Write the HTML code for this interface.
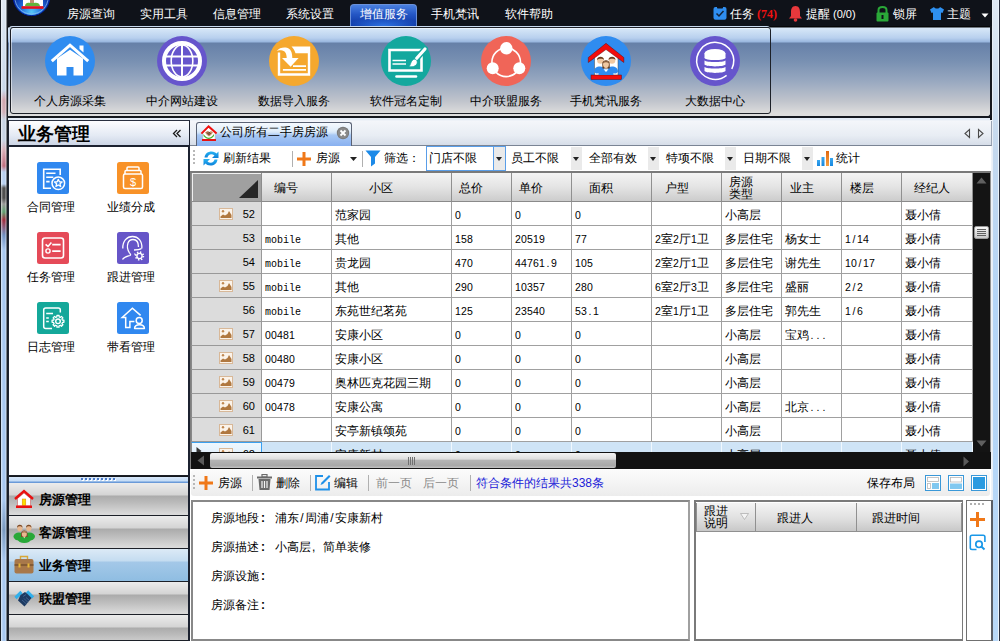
<!DOCTYPE html>
<html><head><meta charset="utf-8">
<style>
*{margin:0;padding:0;box-sizing:border-box;white-space:nowrap}
html,body{width:1000px;height:641px;overflow:hidden;background:#0f1219;font-family:"Liberation Sans",sans-serif;font-size:12px;color:#000}
.a{position:absolute}
#winL{left:0;top:0;width:8px;height:641px;background:linear-gradient(90deg,#1a1e24 0,#1a1e24 1px,rgba(255,255,255,0.6) 1px,rgba(255,255,255,0) 3px,rgba(255,255,255,0) 5px,rgba(255,255,255,0.5) 6px,#1a1e24 7px),linear-gradient(180deg,#dfe8f2 0,#c8d8ea 90px,#d0a8b0 100px,#d0b0b8 112px,#c8d4e4 120px,#c8d4e4 140px,#d8b0b8 150px,#c07080 166px,#b8d0f0 172px,#b8d0f0 184px,#505050 188px,#505050 198px,#9a9a9a 204px,#60a070 212px,#a03040 220px,#7090c0 235px,#a8c8f0 250px,#a8c8f0 500px,#7a9ac0 530px,#a8c8f0 560px,#a8c8f0 641px)}
#winR{left:992px;top:0;width:8px;height:641px;background:linear-gradient(90deg,#e8eef6 0,#e8eef6 1px,rgba(255,255,255,0) 1px,rgba(255,255,255,0) 6px,#eaf2fa 6px,#eaf2fa 7px,#2a3040 7px),linear-gradient(180deg,#dfe9f4 0,#c4d8ee 150px,#b4d4f6 300px,#b8d8f8 641px)}
#menubar{left:8px;top:0;width:984px;height:26px;background:#0f1219}
.mi{position:absolute;top:5px;height:20px;line-height:19px;color:#fff;font-size:12px;text-align:center;white-space:nowrap}
.mi.act{top:4px;height:22px;line-height:18px;background:radial-gradient(ellipse 60% 40% at 50% 100%,rgba(60,140,255,0.7),rgba(60,140,255,0) 100%),linear-gradient(180deg,#4a80e0 0,#2456c4 45%,#0c34a0 100%);border-radius:4px 4px 0 0;border:1px solid #6a90d8;border-bottom:none}
#ribbon{left:8px;top:26px;width:984px;height:92px;border-right:2px solid #15181f;border-bottom:2px solid #15181f;border-bottom-right-radius:4px;background:linear-gradient(180deg,#050608 0,#050608 1px,#d8e8f8 2px,#b8d0ee 12px,#98b6de 16px,#6680a8 17px,#7890b2 35px,#98a8c0 55px,#c0c4cc 75px,#dcdcdc 87px,#dedede 90px)}
#grp{left:10px;top:27px;width:761px;height:87px;border:1px solid #1c2028;border-radius:3px;box-shadow:-1px -1px 0 #c8d8ec,inset 1px 1px 0 rgba(255,255,255,0.5)}
.rb{position:absolute;top:36px;width:50px;height:50px;border-radius:50%}
.rl{position:absolute;top:94px;width:100px;text-align:center;font-size:12px;color:#000;line-height:14px}
#sep1{left:8px;top:118px;width:982px;height:3px;background:linear-gradient(180deg,#e4ecf6 0,#e4ecf6 2px,#2a3040 2px)}
#left{left:8px;top:121px;width:182px;height:520px;background:#fff}
#lhdr{left:8px;top:121px;width:182px;height:26px;background:linear-gradient(180deg,#fdfdff 0,#e4eaf4 60%,#cdd6e6 100%);border-left:1px solid #1c2230;border-right:1px solid #1c2230;border-bottom:2px solid #1c2230}
.lt{font-size:12px;line-height:14px;color:#000}
.acc{left:9px;width:179px;height:33px;border-bottom:1px solid #1c2028;background:linear-gradient(180deg,#ececec 0,#d4d4d4 12px,#ababab 13px,#bcbcbc 20px,#dadada 31px)}
.acc.sel{background:linear-gradient(180deg,#dceaf6 0,#c4dcf0 12px,#a4c8e8 13px,#90bee2 31px)}
.at{position:absolute;left:30px;top:9px;font-size:13px;font-weight:bold;line-height:15px}
.hc{height:29px;background:linear-gradient(180deg,#f4f4f4 0,#e4e4e4 50%,#cccccc 100%);border-right:1px solid #909090;border-bottom:1px solid #8a8a8a}
.ht{font-size:12px;line-height:14px;text-align:center}
.rh{left:191px;width:71px;height:24px;background:#dcdcdc;border-right:1px solid #999;border-bottom:1px solid #999;border-left:1px solid #888}
.rh.rs{background:linear-gradient(180deg,#eef7fe,#d6eafa);border:1px solid #3aa0f0;border-left:1px solid #888;border-bottom:none}
.dc{height:24px;background:#fff;border-right:1px solid #a0a0a0;border-bottom:1px solid #a0a0a0}
.dc.ds{background:#cfe4f6;border-right-color:#f0f8ff}
.rn{font-size:11px;line-height:13px;width:26px;text-align:right}
.ct{font-size:12px;line-height:14px}
.mo{font-family:"Liberation Mono",monospace;font-size:10px;display:inline-block;width:6px;text-align:center}
.dg{font-size:10.5px;display:inline-block;width:6px;text-align:center}
.tb{font-size:12px;line-height:14px}
.grip{width:2px;height:16px;margin-left:1px;background:repeating-linear-gradient(180deg,#b8b8b8 0,#b8b8b8 2px,transparent 2px,transparent 4px)}
.vsep{width:1px;height:16px;background:#b0b0b0}
.ddg{top:147px;width:11px;height:23px;background:#eaeaea}
.dd{top:147px;width:11px;height:23px}.dd:after{content:"";position:absolute;left:2px;top:10px;border-left:3.5px solid transparent;border-right:3.5px solid transparent;border-top:4px solid #222}
.dt{font-size:12px;line-height:14px}
.fh{height:28px;background:linear-gradient(180deg,#f4f4f4 0,#e0e0e0 55%,#c8c8c8 100%)}
#main{left:190px;top:120px;width:802px;height:521px;background:#eef2f8}
</style></head><body>
<div id="winL" class="a"></div>
<div id="winR" class="a"></div>
<div id="menubar" class="a">
<svg class="a" style="left:5px;top:0" width="38" height="17" viewBox="0 0 38 17">
<defs><radialGradient id="lg" cx="0.5" cy="0.9" r="0.6"><stop offset="0" stop-color="#58c8f8"/><stop offset="0.5" stop-color="#1f6ee0"/><stop offset="1" stop-color="#0a2a9a"/></radialGradient></defs>
<circle cx="18.5" cy="-2.6" r="18.2" fill="url(#lg)" stroke="#0020a0" stroke-width="1"/>
<circle cx="18.5" cy="-2.6" r="16.6" fill="none" stroke="#9cc8f4" stroke-width="0.8" opacity="0.8"/>
<rect x="10" y="0" width="20" height="6.5" fill="#fff"/>
<path d="M12 6 C12 3 15 2 17 3 L18 0 L20 0 L21 3 C23 2 27 3 27 6Z" fill="#62b43a"/>
<rect x="17" y="0" width="4" height="3" fill="#c09070"/>
<rect x="8.5" y="6.2" width="22" height="2.6" fill="#e8101a"/>
</svg>
<div class="mi" style="left:59px;width:48px">房源查询</div>
<div class="mi" style="left:131.5px;width:48px">实用工具</div>
<div class="mi" style="left:204.5px;width:48px">信息管理</div>
<div class="mi" style="left:277.5px;width:48px">系统设置</div>
<div class="mi act" style="left:342px;width:67px">增值服务</div>
<div class="mi" style="left:423px;width:48px">手机梵讯</div>
<div class="mi" style="left:497px;width:48px">软件帮助</div>
<svg class="a" style="left:705px;top:6px" width="14" height="14" viewBox="0 0 14 14"><rect x="0.5" y="1" width="13" height="12.8" rx="2" fill="#2f8ef0"/><rect x="4" y="0.3" width="6" height="2.2" rx="0.8" fill="#0f1219"/><path d="M3.5 7.5 L6 10 L10.5 5" stroke="#14243c" stroke-width="1.5" fill="none"/></svg>
<div class="mi" style="left:722px;width:26px;text-align:left">任务</div>
<div class="mi" style="left:749px;width:30px;text-align:left;color:#f01010;font-weight:bold;font-size:12px;font-family:'Liberation Serif',serif">(74)</div>
<svg class="a" style="left:780px;top:5px" width="15" height="17" viewBox="0 0 15 17"><path d="M7.5 1 C4 1 3 4 3 7 L3 11 L1 13.5 L14 13.5 L12 11 L12 7 C12 4 11 1 7.5 1Z" fill="#e8383c"/><circle cx="7.5" cy="15" r="1.8" fill="#e8383c"/></svg>
<div class="mi" style="left:798px;width:26px;text-align:left">提醒</div>
<div class="mi" style="left:825px;width:30px;text-align:left;font-size:11px">(0/0)</div>
<svg class="a" style="left:867px;top:5px" width="15" height="17" viewBox="0 0 15 17"><path d="M3.5 8 L3.5 5 C3.5 1 11.5 1 11.5 5 L11.5 8" stroke="#2aa838" stroke-width="2" fill="none"/><rect x="1.5" y="7.5" width="12" height="9" rx="1" fill="#2aa838"/><rect x="6.5" y="10" width="2" height="4" fill="#0f1219"/></svg>
<div class="mi" style="left:885px;width:26px;text-align:left">锁屏</div>
<svg class="a" style="left:921px;top:6px" width="16" height="15" viewBox="0 0 16 15"><path d="M5 1 L1 3.5 L2.5 7 L4 6.5 L4 14 L12 14 L12 6.5 L13.5 7 L15 3.5 L11 1 C10 3 6 3 5 1Z" fill="#2e90f0"/></svg>
<div class="mi" style="left:939px;width:26px;text-align:left">主题</div>
<svg class="a" style="left:973px;top:13px" width="8" height="5" viewBox="0 0 8 5"><path d="M0.5 0.5 L7.5 0.5 L4 4.5Z" fill="#fff"/></svg>
</div>
<div id="ribbon" class="a"></div>
<div id="grp" class="a"></div>
<svg class="a" style="left:45px;top:36px" width="50" height="50" viewBox="0 0 50 50"><circle cx="25" cy="25" r="25" fill="#2f8cf0"/>
<path d="M6.8 25.2 L25 9.2 L43.2 25.2" stroke="#fff" stroke-width="3" fill="none" stroke-linejoin="miter"/>
<path d="M12 22.5 L25 13.8 L38 22.5 L38 39.5 L28.5 39.5 L28.5 31 L21.5 31 L21.5 39.5 L12 39.5Z" fill="#fff"/>
<path d="M34.5 9.5 L38.5 9.5 L38.5 16.5 L34.5 13Z" fill="#fff"/></svg>
<svg class="a" style="left:157px;top:36px" width="50" height="50" viewBox="0 0 50 50"><circle cx="25" cy="25" r="25" fill="#6655cc"/>
<circle cx="25" cy="25" r="18" stroke="#fff" stroke-width="4" fill="none"/>
<ellipse cx="25" cy="25" rx="10.8" ry="16" stroke="#fff" stroke-width="1.6" fill="none"/>
<path d="M25 9 L25 41 M9 20.5 L41 20.5 M9 29.5 L41 29.5" stroke="#fff" stroke-width="2" fill="none"/></svg>
<svg class="a" style="left:269px;top:36px" width="50" height="50" viewBox="0 0 50 50"><circle cx="25" cy="25" r="25" fill="#f5a82e"/>
<path d="M10 16.5 L10 38.5 L40 38.5 L40 17" stroke="#fff" stroke-width="2.4" fill="none"/>
<path d="M22.5 10.5 L41.2 10.5 L41.2 17.3 L26.5 17.3 C25.5 14.5 24.5 12.3 22.5 10.5Z" fill="#fff"/>
<path d="M7.7 15 C10 11.5 15 11 18 11.8 C21.5 12.8 23.3 16 23.3 22 L17.7 22 C17.7 17.5 16 14.5 12 14.3 C10 14.2 8.5 14.6 7.7 15Z" fill="#fff"/>
<path d="M13 22 L29.6 22 L21.6 30.8Z" fill="#fff"/>
<path d="M24 30.2 L37 30.2 M13.9 33.9 L37 33.9" stroke="#fff" stroke-width="1.8"/></svg>
<svg class="a" style="left:381px;top:36px" width="50" height="50" viewBox="0 0 50 50"><circle cx="25" cy="25" r="25" fill="#13a89e"/>
<path d="M8.5 14 L40.5 14 L40.5 34.5 L8.5 34.5Z" stroke="#fff" stroke-width="2.6" fill="none"/>
<path d="M15.5 40.5 L35 40.5" stroke="#fff" stroke-width="2.6" stroke-linecap="round"/>
<path d="M11.5 24.5 L25 24.5 M11.5 28 L25 28" stroke="#fff" stroke-width="1.7"/>
<path d="M44 13 L35 23" stroke="#13a89e" stroke-width="6" stroke-linecap="round"/><path d="M44 13 L35.5 22.5" stroke="#fff" stroke-width="3.2" stroke-linecap="round"/>
<path d="M34 23 C37 24 37.5 29 32.5 30.5 C30.5 31 29 30.8 28 30.5 C30 29 29.5 23.5 34 23Z" fill="#fff" stroke="#13a89e" stroke-width="0.8"/></svg>
<svg class="a" style="left:481px;top:36px" width="50" height="50" viewBox="0 0 50 50"><circle cx="25" cy="25" r="25" fill="#f06558"/>
<circle cx="25.2" cy="26.3" r="14.3" stroke="#fff" stroke-width="1.6" fill="none"/>
<circle cx="25.3" cy="12.3" r="6.2" fill="#fff"/><circle cx="11.7" cy="32.2" r="6" fill="#fff"/><circle cx="38.3" cy="32.2" r="6" fill="#fff"/></svg>
<svg class="a" style="left:581px;top:36px" width="50" height="50" viewBox="0 0 50 50"><circle cx="25" cy="25" r="25" fill="#2f8cf0"/>
<path d="M13.5 20 L25 12 L37 20 L37 39.5 L13.5 39.5Z" fill="#fff" stroke="#444" stroke-width="0.5"/>
<path d="M25 7.3 L42.8 21.5 L42.8 26.5 L25 13.5 L7.3 26.5 L7.3 21.5Z" fill="#f20c0c" stroke="#5a1010" stroke-width="0.5"/>
<rect x="10" y="39" width="30.5" height="4.5" fill="#f20c0c" stroke="#5a1010" stroke-width="0.5"/>
<path d="M13 36 C13 32 15.5 30.5 19 30.5 C21.5 30.5 23 31.5 23.5 33 L23 37 L15 37.5Z" fill="#2f8cf0"/>
<path d="M37 36 C37 32 34.5 30.5 31 30.5 C28.5 30.5 27 31.5 26.5 33 L27 37 L35 37.5Z" fill="#2f8cf0"/>
<circle cx="19.5" cy="24.5" r="3.3" fill="#f2c9a2"/><path d="M16 24 C15.8 20 23 19.5 23 24 C22 22.2 17.5 22.2 16 24Z" fill="#6a3c1c"/>
<circle cx="31" cy="24.5" r="3.3" fill="#f2c9a2"/><path d="M27.5 24 C27.3 20 34.5 19.5 34.5 24 C33.5 22.2 29 22.2 27.5 24Z" fill="#6a3c1c"/>
<path d="M17.5 39 C17.5 34.5 20.5 33 25 33 C29.5 33 32.5 34.5 32.5 39Z" fill="#2f8cf0"/>
<path d="M22.5 33.2 L25 36 L27.5 33.2Z" fill="#fff"/>
<path d="M21.3 28 C21 23 29 23 28.7 28 L28.8 32.5 L27.5 32.5 L21.5 32.5 Z" fill="#6a3c1c"/>
<ellipse cx="25" cy="28.5" rx="2.9" ry="3.4" fill="#f2c9a2"/>
<path d="M22 27 C22.5 24.8 27.5 24.8 28 27 C27 26 23 26 22 27Z" fill="#6a3c1c"/></svg>
<svg class="a" style="left:690px;top:36px" width="50" height="50" viewBox="0 0 50 50"><circle cx="25" cy="25" r="25" fill="#6655cc"/>
<path d="M36.6 39.4 A18.5 18.5 0 1 1 41.8 33" stroke="#fff" stroke-width="1.5" fill="none"/>
<ellipse cx="25" cy="17.5" rx="10.5" ry="4.5" fill="#fff"/><rect x="14.5" y="17.5" width="21" height="4.5" fill="#fff"/><ellipse cx="25" cy="22" rx="10.5" ry="2" fill="#fff"/>
<path d="M14.5 24.5 C17 26.5 33 26.5 35.5 24.5 L35.5 28.5 C33 31 17 31 14.5 28.5Z" fill="#fff"/>
<path d="M14.5 31 C17 33 33 33 35.5 31 L35.5 35 C33 37.5 17 37.5 14.5 35Z" fill="#fff"/></svg>
<div class="rl" style="left:20px">个人房源采集</div>
<div class="rl" style="left:132px">中介网站建设</div>
<div class="rl" style="left:244px">数据导入服务</div>
<div class="rl" style="left:356px">软件冠名定制</div>
<div class="rl" style="left:456px">中介联盟服务</div>
<div class="rl" style="left:556px">手机梵讯服务</div>
<div class="rl" style="left:665px">大数据中心</div>
<div id="sep1" class="a"></div>
<div id="left" class="a"></div>
<div id="lhdr" class="a"><div class="a" style="left:9px;top:2px;font-size:18px;font-weight:bold;line-height:22px">业务管理</div><svg class="a" style="left:163px;top:8px" width="10" height="9" viewBox="0 0 10 9"><path d="M5 1 L1.5 4.5 L5 8 M8.5 1 L5 4.5 L8.5 8" stroke="#1a1a1a" stroke-width="1.3" fill="none"/></svg></div>

<div class="a" style="left:8px;top:147px;width:1px;height:494px;background:#1c2230"></div>
<svg class="a" style="left:37px;top:162px" width="32" height="32" viewBox="0 0 32 32"><rect width="32" height="32" rx="2.5" fill="#3088f0"/>
<path d="M23.2 13 L23.2 7.2 L6.7 7.2 L6.7 26.2 L14 26.2" stroke="#fff" stroke-width="1.6" fill="none"/>
<path d="M9.2 11.3 L18.5 11.3 M9.2 15.2 L16.3 15.2 M9.2 19.6 L12.6 19.6" stroke="#fff" stroke-width="1.6"/>
<circle cx="21.3" cy="21.3" r="6.3" stroke="#fff" stroke-width="1.5" fill="#3088f0"/>
<path d="M21.3 17.3 L22.4 19.8 L25.1 20 L23 21.8 L23.7 24.5 L21.3 23 L18.9 24.5 L19.6 21.8 L17.5 20 L20.2 19.8Z" stroke="#fff" stroke-width="1.3" fill="none" stroke-linejoin="round"/></svg>
<svg class="a" style="left:117px;top:162px" width="32" height="32" viewBox="0 0 32 32"><rect width="32" height="32" rx="2.5" fill="#f89228"/>
<path d="M10 9 L10 6 Q10 5 11 5 L21 5 Q22 5 22 6 L22 9" stroke="#fff" stroke-width="1.5" fill="none"/>
<path d="M8 12 L8 9.5 Q8 8.5 9 8.5 L23 8.5 Q24 8.5 24 9.5 L24 12" stroke="#fff" stroke-width="1.5" fill="none"/>
<rect x="6.5" y="12" width="19" height="14.5" rx="1.5" stroke="#fff" stroke-width="1.5" fill="none"/>
<text x="16" y="24" font-size="11" fill="#fff" text-anchor="middle" font-family="Liberation Sans">$</text></svg>
<svg class="a" style="left:37px;top:232px" width="32" height="32" viewBox="0 0 32 32"><rect width="32" height="32" rx="2.5" fill="#e54a58"/>
<rect x="5.5" y="6" width="21" height="20" rx="2.5" stroke="#fff" stroke-width="1.6" fill="none"/>
<path d="M8.6 12.3 L11 14.4 L14.4 10.4 M15.2 12.6 L23.6 12.6 M15.2 19.1 L23.6 19.1" stroke="#fff" stroke-width="1.6" fill="none"/>
<circle cx="11" cy="19" r="2.1" stroke="#fff" stroke-width="1.4" fill="none"/></svg>
<svg class="a" style="left:117px;top:232px" width="32" height="32" viewBox="0 0 32 32"><rect width="32" height="32" rx="2.5" fill="#6655c8"/>
<path d="M5.8 16.5 C5.5 9 10 4.5 15.5 4.5 C21 4.5 25.5 9 24.8 16.5" stroke="#fff" stroke-width="1.3" fill="none"/>
<path d="M12.5 21 C10.5 18 10 14 11 11 C12 8 14 7.5 16 7.5 C19 7.5 21.5 9.5 21.5 15" stroke="#fff" stroke-width="1.3" fill="none"/>
<path d="M17 18 C20 18 23 17.5 24.5 16.5" stroke="#fff" stroke-width="1.3" fill="none"/>
<path d="M12.5 21 C13.5 22 14 23 13 23.5 C10 24.5 7 25 5.5 27.5" stroke="#fff" stroke-width="1.3" fill="none"/>
<path d="M17.5 21.5 L18.3 22.8" stroke="#fff" stroke-width="1.2"/>
<circle cx="22.5" cy="24" r="2.6" stroke="#fff" stroke-width="1.4" fill="none"/>
<circle cx="22.5" cy="24" r="3.9" stroke="#fff" stroke-width="1.6" stroke-dasharray="1.4 1.66" fill="none"/></svg>
<svg class="a" style="left:37px;top:302px" width="32" height="32" viewBox="0 0 32 32"><rect width="32" height="32" rx="2.5" fill="#14a89a"/>
<path d="M23.3 10.5 L23.3 8 Q23.3 6 21.3 6 L8.7 6 Q6.7 6 6.7 8 L6.7 24.6 Q6.7 26.6 8.7 26.6 L15 26.6" stroke="#fff" stroke-width="1.5" fill="none"/>
<path d="M9.2 11.5 L16 11.5 M9.2 16 L11.8 16 M9.2 19.6 L11.8 19.6" stroke="#fff" stroke-width="1.5"/>
<path d="M25.47 18.21 L26.91 18.25 L26.91 20.35 L25.47 20.39 L24.93 21.69 L25.92 22.73 L24.43 24.22 L23.39 23.23 L22.09 23.77 L22.05 25.21 L19.95 25.21 L19.91 23.77 L18.61 23.23 L17.57 24.22 L16.08 22.73 L17.07 21.69 L16.53 20.39 L15.09 20.35 L15.09 18.25 L16.53 18.21 L17.07 16.91 L16.08 15.87 L17.57 14.38 L18.61 15.37 L19.91 14.83 L19.95 13.39 L22.05 13.39 L22.09 14.83 L23.39 15.37 L24.43 14.38 L25.92 15.87 L24.93 16.91Z" stroke="#fff" stroke-width="1.3" fill="#14a89a" stroke-linejoin="round"/>
<circle cx="21" cy="19.3" r="2.3" stroke="#fff" stroke-width="1.4" fill="none"/></svg>
<svg class="a" style="left:117px;top:302px" width="32" height="32" viewBox="0 0 32 32"><rect width="32" height="32" rx="2.5" fill="#3088f0"/>
<path d="M23.6 13.4 L15.4 6.2 L5.2 15.4 L8.7 15.4 L8.7 25.4 L12.9 25.4 L12.9 19.6 L17.4 19.6" stroke="#fff" stroke-width="1.5" fill="none" stroke-linejoin="miter"/>
<circle cx="22.2" cy="18.4" r="3" stroke="#fff" stroke-width="1.5" fill="none"/>
<path d="M17.6 26.5 C17.6 21.5 27.4 21.5 27.4 26.5Z" stroke="#fff" stroke-width="1.5" fill="none" stroke-linejoin="round"/></svg>
<div class="a lt" style="left:26.5px;top:200px">合同管理</div>
<div class="a lt" style="left:106.5px;top:200px">业绩分成</div>
<div class="a lt" style="left:26.5px;top:270px">任务管理</div>
<div class="a lt" style="left:106.5px;top:270px">跟进管理</div>
<div class="a lt" style="left:26.5px;top:340px">日志管理</div>
<div class="a lt" style="left:106.5px;top:340px">带看管理</div>
<div class="a" style="left:9px;top:475px;width:181px;height:2px;background:linear-gradient(180deg,#20242c,#101418)"></div>
<div class="a" style="left:9px;top:477px;width:179px;height:6px;background:linear-gradient(180deg,#d8e8fa 0,#c4dcf6 4px,#6a9ad8 5px)"></div>
<div class="a" style="left:82px;top:479px;width:36px;height:2px;background:repeating-linear-gradient(90deg,#fff 0,#fff 2px,transparent 2px,transparent 4px)"></div><div class="a" style="left:81px;top:478px;width:36px;height:2px;background:repeating-linear-gradient(90deg,#4a7ac8 0,#4a7ac8 2px,transparent 2px,transparent 4px)"></div>
<div class="acc a" style="top:483px"><svg class="a" style="left:5px;top:6px" width="20" height="20" viewBox="0 0 20 20"><path d="M3.5 9.5 L3.5 17 L16.5 17 L16.5 9.5 L10 4Z" fill="#fff" stroke="#c86060" stroke-width="0.6"/><path d="M1 10 L10 2 L19 10" stroke="#e81010" stroke-width="2.4" fill="none"/><rect x="8.2" y="10" width="3.6" height="6.5" fill="#f8e000" stroke="#e88000" stroke-width="0.5"/><rect x="2" y="16.5" width="16" height="2.5" fill="#e81010"/></svg><div class="at">房源管理</div></div>
<div class="acc a" style="top:516px"><svg class="a" style="left:4px;top:4px" width="22" height="23" viewBox="0 0 22 23"><ellipse cx="6" cy="16.5" rx="5.5" ry="4" fill="#28a838"/><ellipse cx="16.5" cy="16.5" rx="5.5" ry="4" fill="#28a838"/>
<ellipse cx="6.8" cy="8" rx="2.6" ry="3.2" fill="#e8b890"/><path d="M4 8 C3.5 3.5 10 3.5 9.6 8 C9 6 5 5.5 4 8Z" fill="#7a4a28"/>
<ellipse cx="15.8" cy="8" rx="2.6" ry="3.2" fill="#e8b890"/><path d="M13 8 C12.5 3.5 19 3.5 18.6 8 C18 6 14 5.5 13 8Z" fill="#7a4a28"/>
<ellipse cx="11.3" cy="19.5" rx="6.5" ry="3.5" fill="#28a838"/><path d="M10 16 L11.3 18.5 L12.6 16Z" fill="#f0d0b0"/>
<path d="M8 14.5 C7.5 9 15 9 14.6 14.5 L14.6 17 L8 17Z" fill="#7a4a28"/><ellipse cx="11.3" cy="14" rx="2.5" ry="3" fill="#e8b890"/><path d="M8.8 13 C9.5 11 13.5 11 13.8 13 C12.5 12 10 12 8.8 13Z" fill="#7a4a28"/></svg><div class="at">客源管理</div></div>
<div class="acc a sel" style="top:549px"><svg class="a" style="left:5px;top:6px" width="20" height="19" viewBox="0 0 20 19"><path d="M6.5 4 L6.5 1.5 L13.5 1.5 L13.5 4" stroke="#d8a838" stroke-width="1.4" fill="none"/><rect x="0.5" y="4" width="19" height="14.5" rx="2" fill="#a8784a"/><path d="M0.5 10 L19.5 10" stroke="#6a4828" stroke-width="1.2"/><rect x="4.5" y="8.5" width="2" height="4" fill="#e8b838"/><rect x="13.5" y="8.5" width="2" height="4" fill="#e8b838"/></svg><div class="at">业务管理</div></div>
<div class="acc a" style="top:582px"><svg class="a" style="left:5px;top:6px" width="20" height="20" viewBox="0 0 20 20"><path d="M1.5 10 L7.5 4" stroke="#30b0ec" stroke-width="3.2"/><path d="M13 3.5 L19 9.5" stroke="#30b0ec" stroke-width="3.2"/><path d="M6.5 7 L11 4 L13.5 6 L17.5 10 L10.5 18.5 L4 12.5 Z" fill="#1c3a62"/><path d="M9 8.5 L12 6.5 M8 12 L12.5 16 M10 10.5 L14 14.5 M12 9.5 L15.5 12.5" stroke="#4a70a0" stroke-width="0.7"/></svg><div class="at">联盟管理</div></div>
<div class="acc a" style="top:615px;height:26px"></div>

<div id="main" class="a"></div>
<div class="a" style="left:188px;top:147px;width:2px;height:494px;background:#1c2230"></div>
<!--P1-->
<div class="a" style="left:190px;top:121px;width:802px;height:25px;background:linear-gradient(180deg,#f4f6fa 0,#e8edf4 60%,#d6dde8 100%);border-right:1px solid #9aa4b4;border-bottom:1px solid #7a8494"></div>
<div class="a" style="left:196px;top:122px;width:156px;height:24px;border:1px solid #5a6274;border-bottom:none;border-radius:3px 3px 0 0;background:linear-gradient(180deg,#f6fafe 0,#e0eefa 8px,#cfe2f8 10px,#a8c8f4 12px,#88b0f0 100%)"></div>
<svg class="a" style="left:200px;top:124px" width="18" height="17" viewBox="0 0 18 17"><path d="M3 9 L3 15.5 L15 15.5 L15 9 L8.6 3Z" fill="#fff" stroke="#c8b8b0" stroke-width="0.5"/><path d="M1.4 9.6 L8.6 2.4 L16.6 9.6" stroke="#f01010" stroke-width="2" fill="none"/><rect x="2" y="15" width="14" height="2" fill="#e81010"/><path d="M3.5 10 C5 12.5 7 13.5 8.8 13.8 C10.5 13.5 12.5 12.5 14 10 L14 12 C12.5 14 10.5 14.8 8.8 15 C7 14.8 5 14 3.5 12Z" fill="#48b030"/><path d="M5 8.5 L7.5 7 L9.5 8 L11 7 L13 8.5 L11 11 L9 12.5 L7 11Z" fill="#c89068"/><path d="M7 8.5 L9.5 11 M8.5 7.8 L10.5 10" stroke="#402010" stroke-width="1"/></svg>
<div class="a" style="left:220px;top:125px;font-size:12px;line-height:14px">公司所有二手房房源</div>
<svg class="a" style="left:336px;top:126px" width="14" height="14" viewBox="0 0 14 14"><circle cx="7" cy="7" r="6.2" fill="#7a7a7a"/><circle cx="7" cy="7" r="5.2" fill="#8a8a8a"/><path d="M4.5 4.5 L9.5 9.5 M9.5 4.5 L4.5 9.5" stroke="#fff" stroke-width="1.8"/></svg>
<svg class="a" style="left:963px;top:128px" width="24" height="11" viewBox="0 0 24 11"><path d="M6.5 1.5 L6.5 9.5 L2 5.5Z" fill="none" stroke="#4a4a4a" stroke-width="1.1"/><path d="M15.5 1.5 L15.5 9.5 L20 5.5Z" fill="none" stroke="#4a4a4a" stroke-width="1.1"/></svg>
<div class="a" style="left:190px;top:146px;width:801px;height:25px;background:#fff"></div>
<div class="a grip" style="left:192px;top:150px"></div>
<svg class="a" style="left:202px;top:150px" width="18" height="17" viewBox="0 0 18 17"><defs><linearGradient id="rf" x1="0" y1="0" x2="0" y2="1"><stop offset="0" stop-color="#28b4f4"/><stop offset="1" stop-color="#0c80d8"/></linearGradient></defs><path d="M2.5 7.5 C3 3.5 6 1.5 9.5 1.5 C12 1.5 13.5 2.5 14.5 3.5 L16.5 1.5 L16.5 8 L10 8 L12.5 5.5 C11.5 4.7 10.5 4.3 9.3 4.3 C7.3 4.3 5.8 5.8 5.5 7.5Z" fill="url(#rf)"/><path d="M15.5 9.5 C15 13.5 12 15.5 8.5 15.5 C6 15.5 4.5 14.5 3.5 13.5 L1.5 15.5 L1.5 9 L8 9 L5.5 11.5 C6.5 12.3 7.5 12.7 8.7 12.7 C10.7 12.7 12.2 11.2 12.5 9.5Z" fill="url(#rf)"/></svg>
<div class="a tb" style="left:223px;top:151px">刷新结果</div>
<div class="a vsep" style="left:292px;top:151px"></div>
<svg class="a" style="left:296px;top:151px" width="16" height="16" viewBox="0 0 16 16"><path d="M8 1 L8 15 M1 8 L15 8" stroke="#f07818" stroke-width="3"/></svg>
<div class="a tb" style="left:316px;top:151px">房源</div>
<svg class="a" style="left:350px;top:157px" width="7" height="4" viewBox="0 0 7 4"><path d="M0 0 L7 0 L3.5 4Z" fill="#222"/></svg>
<div class="a vsep" style="left:362px;top:151px"></div>
<svg class="a" style="left:365px;top:150px" width="16" height="17" viewBox="0 0 16 17"><path d="M0.5 0.5 L15.5 0.5 L10 7 L10 13.5 L6 16.5 L6 7Z" fill="#1c8ae8"/></svg>
<div class="a tb" style="left:384px;top:151px">筛选：</div>
<div class="a" style="left:426px;top:146px;width:80px;height:25px;border:1px solid #5a9ee8;background:#fff"></div>
<div class="a" style="left:493px;top:147px;width:1px;height:23px;background:#5a9ee8"></div>
<div class="a tb" style="left:429px;top:151px">门店不限</div>
<div class="a ddg" style="left:494px;width:11px"></div><div class="a dd" style="left:494px"></div>
<div class="a tb" style="left:511px;top:151px">员工不限</div>
<div class="a ddg" style="left:571px"></div><div class="a dd" style="left:571px"></div>
<div class="a tb" style="left:589px;top:151px">全部有效</div>
<div class="a ddg" style="left:648px"></div><div class="a dd" style="left:648px"></div>
<div class="a tb" style="left:666px;top:151px">特项不限</div>
<div class="a ddg" style="left:725px"></div><div class="a dd" style="left:725px"></div>
<div class="a tb" style="left:743px;top:151px">日期不限</div>
<div class="a ddg" style="left:802px"></div><div class="a dd" style="left:802px"></div>
<svg class="a" style="left:816px;top:150px" width="17" height="16" viewBox="0 0 17 16"><defs><linearGradient id="bb" x1="0" y1="0" x2="0" y2="1"><stop offset="0" stop-color="#3aa8f0"/><stop offset="1" stop-color="#1888e0"/></linearGradient><linearGradient id="bo" x1="0" y1="0" x2="0" y2="1"><stop offset="0" stop-color="#e06810"/><stop offset="1" stop-color="#f8a040"/></linearGradient></defs><rect x="1" y="10" width="3" height="6" fill="url(#bb)"/><rect x="5.5" y="7" width="3" height="9" fill="url(#bb)"/><rect x="10" y="1" width="3" height="15" fill="url(#bo)"/><rect x="14" y="8" width="3" height="8" fill="url(#bb)"/></svg>
<div class="a tb" style="left:836px;top:151px">统计</div>

<!--/P1-->
<!--MAIN-->
<div class="a" style="left:190px;top:171px;width:801px;height:298px;background:#fff;border-top:2px solid #7a7a7a;border-left:1px solid #808080;border-right:1px solid #909090"></div>
<div class="a" style="left:191px;top:173px;width:782px;height:29px;background:#8c8c8c"></div>
<div class="a" style="left:192px;top:173px;width:69px;height:28px;background:#a0a0a0;border-left:1px solid #f0f0f0;border-top:1px solid #f0f0f0;box-shadow:inset 0 0 0 1px #a0a0a0"></div>
<svg class="a" style="left:237px;top:179px" width="22" height="20" viewBox="0 0 22 20"><path d="M21 1 L21 19 L2 19Z" fill="#262626"/></svg>
<div class="a hc" style="left:262px;top:173px;width:70px"></div>
<div class="a hc" style="left:332px;top:173px;width:120px"></div>
<div class="a hc" style="left:452px;top:173px;width:60px"></div>
<div class="a hc" style="left:512px;top:173px;width:60px"></div>
<div class="a hc" style="left:572px;top:173px;width:80px"></div>
<div class="a hc" style="left:652px;top:173px;width:70px"></div>
<div class="a hc" style="left:722px;top:173px;width:60px"></div>
<div class="a hc" style="left:782px;top:173px;width:60px"></div>
<div class="a hc" style="left:842px;top:173px;width:60px"></div>
<div class="a hc" style="left:902px;top:173px;width:71px"></div>
<div class="a ht" style="left:286px;top:181px;width:80px;margin-left:-40px">编号</div>
<div class="a ht" style="left:381px;top:181px;width:80px;margin-left:-40px">小区</div>
<div class="a ht" style="left:471px;top:181px;width:80px;margin-left:-40px">总价</div>
<div class="a ht" style="left:531px;top:181px;width:80px;margin-left:-40px">单价</div>
<div class="a ht" style="left:601px;top:181px;width:80px;margin-left:-40px">面积</div>
<div class="a ht" style="left:677px;top:181px;width:80px;margin-left:-40px">户型</div>
<div class="a ht" style="left:802px;top:181px;width:80px;margin-left:-40px">业主</div>
<div class="a ht" style="left:862px;top:181px;width:80px;margin-left:-40px">楼层</div>
<div class="a ht" style="left:932px;top:181px;width:80px;margin-left:-40px">经纪人</div>
<div class="a ht" style="left:741px;top:176px;width:40px;margin-left:-20px;line-height:12px;font-size:12px">房源<br>类型</div>
<div class="a rh" style="left:191px;top:202px"></div>
<svg class="a" style="left:219px;top:208px" width="14" height="12" viewBox="0 0 14 12"><rect x="0.5" y="0.5" width="13" height="11" fill="#fbf3ea" stroke="#d8b898"/><path d="M1.5 10 L1.5 8.5 L4 6.5 L6 7.5 L8.5 6 L10 3 L12.5 7 L12.5 10Z" fill="#b07840"/><circle cx="4" cy="3.3" r="1.2" fill="#c08850"/></svg>
<div class="a rn" style="left:229px;top:208px">52</div>
<div class="a dc" style="left:262px;top:202px;width:70px"></div>
<div class="a dc" style="left:332px;top:202px;width:120px"></div>
<div class="a ct" style="left:335px;top:208px">范家园</div>
<div class="a dc" style="left:452px;top:202px;width:60px"></div>
<div class="a ct" style="left:455px;top:208px"><span class="dg">0</span></div>
<div class="a dc" style="left:512px;top:202px;width:60px"></div>
<div class="a ct" style="left:515px;top:208px"><span class="dg">0</span></div>
<div class="a dc" style="left:572px;top:202px;width:80px"></div>
<div class="a ct" style="left:575px;top:208px"><span class="dg">0</span></div>
<div class="a dc" style="left:652px;top:202px;width:70px"></div>
<div class="a dc" style="left:722px;top:202px;width:60px"></div>
<div class="a ct" style="left:725px;top:208px">小高层</div>
<div class="a dc" style="left:782px;top:202px;width:60px"></div>
<div class="a dc" style="left:842px;top:202px;width:60px"></div>
<div class="a dc" style="left:902px;top:202px;width:71px"></div>
<div class="a ct" style="left:905px;top:208px">聂小倩</div>
<div class="a rh" style="left:191px;top:226px"></div>
<div class="a rn" style="left:229px;top:232px">53</div>
<div class="a dc" style="left:262px;top:226px;width:70px"></div>
<div class="a ct" style="left:265px;top:232px"><span class="mo">m</span><span class="mo">o</span><span class="mo">b</span><span class="mo">i</span><span class="mo">l</span><span class="mo">e</span></div>
<div class="a dc" style="left:332px;top:226px;width:120px"></div>
<div class="a ct" style="left:335px;top:232px">其他</div>
<div class="a dc" style="left:452px;top:226px;width:60px"></div>
<div class="a ct" style="left:455px;top:232px"><span class="dg">1</span><span class="dg">5</span><span class="dg">8</span></div>
<div class="a dc" style="left:512px;top:226px;width:60px"></div>
<div class="a ct" style="left:515px;top:232px"><span class="dg">2</span><span class="dg">0</span><span class="dg">5</span><span class="dg">1</span><span class="dg">9</span></div>
<div class="a dc" style="left:572px;top:226px;width:80px"></div>
<div class="a ct" style="left:575px;top:232px"><span class="dg">7</span><span class="dg">7</span></div>
<div class="a dc" style="left:652px;top:226px;width:70px"></div>
<div class="a ct" style="left:655px;top:232px"><span class="dg">2</span>室<span class="dg">2</span>厅<span class="dg">1</span>卫</div>
<div class="a dc" style="left:722px;top:226px;width:60px"></div>
<div class="a ct" style="left:725px;top:232px">多层住宅</div>
<div class="a dc" style="left:782px;top:226px;width:60px"></div>
<div class="a ct" style="left:785px;top:232px">杨女士</div>
<div class="a dc" style="left:842px;top:226px;width:60px"></div>
<div class="a ct" style="left:845px;top:232px"><span class="dg">1</span><span class="dg">/</span><span class="dg">1</span><span class="dg">4</span></div>
<div class="a dc" style="left:902px;top:226px;width:71px"></div>
<div class="a ct" style="left:905px;top:232px">聂小倩</div>
<div class="a rh" style="left:191px;top:250px"></div>
<div class="a rn" style="left:229px;top:256px">54</div>
<div class="a dc" style="left:262px;top:250px;width:70px"></div>
<div class="a ct" style="left:265px;top:256px"><span class="mo">m</span><span class="mo">o</span><span class="mo">b</span><span class="mo">i</span><span class="mo">l</span><span class="mo">e</span></div>
<div class="a dc" style="left:332px;top:250px;width:120px"></div>
<div class="a ct" style="left:335px;top:256px">贵龙园</div>
<div class="a dc" style="left:452px;top:250px;width:60px"></div>
<div class="a ct" style="left:455px;top:256px"><span class="dg">4</span><span class="dg">7</span><span class="dg">0</span></div>
<div class="a dc" style="left:512px;top:250px;width:60px"></div>
<div class="a ct" style="left:515px;top:256px"><span class="dg">4</span><span class="dg">4</span><span class="dg">7</span><span class="dg">6</span><span class="dg">1</span><span class="dg">.</span><span class="dg">9</span></div>
<div class="a dc" style="left:572px;top:250px;width:80px"></div>
<div class="a ct" style="left:575px;top:256px"><span class="dg">1</span><span class="dg">0</span><span class="dg">5</span></div>
<div class="a dc" style="left:652px;top:250px;width:70px"></div>
<div class="a ct" style="left:655px;top:256px"><span class="dg">2</span>室<span class="dg">2</span>厅<span class="dg">1</span>卫</div>
<div class="a dc" style="left:722px;top:250px;width:60px"></div>
<div class="a ct" style="left:725px;top:256px">多层住宅</div>
<div class="a dc" style="left:782px;top:250px;width:60px"></div>
<div class="a ct" style="left:785px;top:256px">谢先生</div>
<div class="a dc" style="left:842px;top:250px;width:60px"></div>
<div class="a ct" style="left:845px;top:256px"><span class="dg">1</span><span class="dg">0</span><span class="dg">/</span><span class="dg">1</span><span class="dg">7</span></div>
<div class="a dc" style="left:902px;top:250px;width:71px"></div>
<div class="a ct" style="left:905px;top:256px">聂小倩</div>
<div class="a rh" style="left:191px;top:274px"></div>
<svg class="a" style="left:219px;top:280px" width="14" height="12" viewBox="0 0 14 12"><rect x="0.5" y="0.5" width="13" height="11" fill="#fbf3ea" stroke="#d8b898"/><path d="M1.5 10 L1.5 8.5 L4 6.5 L6 7.5 L8.5 6 L10 3 L12.5 7 L12.5 10Z" fill="#b07840"/><circle cx="4" cy="3.3" r="1.2" fill="#c08850"/></svg>
<div class="a rn" style="left:229px;top:280px">55</div>
<div class="a dc" style="left:262px;top:274px;width:70px"></div>
<div class="a ct" style="left:265px;top:280px"><span class="mo">m</span><span class="mo">o</span><span class="mo">b</span><span class="mo">i</span><span class="mo">l</span><span class="mo">e</span></div>
<div class="a dc" style="left:332px;top:274px;width:120px"></div>
<div class="a ct" style="left:335px;top:280px">其他</div>
<div class="a dc" style="left:452px;top:274px;width:60px"></div>
<div class="a ct" style="left:455px;top:280px"><span class="dg">2</span><span class="dg">9</span><span class="dg">0</span></div>
<div class="a dc" style="left:512px;top:274px;width:60px"></div>
<div class="a ct" style="left:515px;top:280px"><span class="dg">1</span><span class="dg">0</span><span class="dg">3</span><span class="dg">5</span><span class="dg">7</span></div>
<div class="a dc" style="left:572px;top:274px;width:80px"></div>
<div class="a ct" style="left:575px;top:280px"><span class="dg">2</span><span class="dg">8</span><span class="dg">0</span></div>
<div class="a dc" style="left:652px;top:274px;width:70px"></div>
<div class="a ct" style="left:655px;top:280px"><span class="dg">6</span>室<span class="dg">2</span>厅<span class="dg">3</span>卫</div>
<div class="a dc" style="left:722px;top:274px;width:60px"></div>
<div class="a ct" style="left:725px;top:280px">多层住宅</div>
<div class="a dc" style="left:782px;top:274px;width:60px"></div>
<div class="a ct" style="left:785px;top:280px">盛丽</div>
<div class="a dc" style="left:842px;top:274px;width:60px"></div>
<div class="a ct" style="left:845px;top:280px"><span class="dg">2</span><span class="dg">/</span><span class="dg">2</span></div>
<div class="a dc" style="left:902px;top:274px;width:71px"></div>
<div class="a ct" style="left:905px;top:280px">聂小倩</div>
<div class="a rh" style="left:191px;top:298px"></div>
<div class="a rn" style="left:229px;top:304px">56</div>
<div class="a dc" style="left:262px;top:298px;width:70px"></div>
<div class="a ct" style="left:265px;top:304px"><span class="mo">m</span><span class="mo">o</span><span class="mo">b</span><span class="mo">i</span><span class="mo">l</span><span class="mo">e</span></div>
<div class="a dc" style="left:332px;top:298px;width:120px"></div>
<div class="a ct" style="left:335px;top:304px">东苑世纪茗苑</div>
<div class="a dc" style="left:452px;top:298px;width:60px"></div>
<div class="a ct" style="left:455px;top:304px"><span class="dg">1</span><span class="dg">2</span><span class="dg">5</span></div>
<div class="a dc" style="left:512px;top:298px;width:60px"></div>
<div class="a ct" style="left:515px;top:304px"><span class="dg">2</span><span class="dg">3</span><span class="dg">5</span><span class="dg">4</span><span class="dg">0</span></div>
<div class="a dc" style="left:572px;top:298px;width:80px"></div>
<div class="a ct" style="left:575px;top:304px"><span class="dg">5</span><span class="dg">3</span><span class="dg">.</span><span class="dg">1</span></div>
<div class="a dc" style="left:652px;top:298px;width:70px"></div>
<div class="a ct" style="left:655px;top:304px"><span class="dg">2</span>室<span class="dg">1</span>厅<span class="dg">1</span>卫</div>
<div class="a dc" style="left:722px;top:298px;width:60px"></div>
<div class="a ct" style="left:725px;top:304px">多层住宅</div>
<div class="a dc" style="left:782px;top:298px;width:60px"></div>
<div class="a ct" style="left:785px;top:304px">郭先生</div>
<div class="a dc" style="left:842px;top:298px;width:60px"></div>
<div class="a ct" style="left:845px;top:304px"><span class="dg">1</span><span class="dg">/</span><span class="dg">6</span></div>
<div class="a dc" style="left:902px;top:298px;width:71px"></div>
<div class="a ct" style="left:905px;top:304px">聂小倩</div>
<div class="a rh" style="left:191px;top:322px"></div>
<svg class="a" style="left:219px;top:328px" width="14" height="12" viewBox="0 0 14 12"><rect x="0.5" y="0.5" width="13" height="11" fill="#fbf3ea" stroke="#d8b898"/><path d="M1.5 10 L1.5 8.5 L4 6.5 L6 7.5 L8.5 6 L10 3 L12.5 7 L12.5 10Z" fill="#b07840"/><circle cx="4" cy="3.3" r="1.2" fill="#c08850"/></svg>
<div class="a rn" style="left:229px;top:328px">57</div>
<div class="a dc" style="left:262px;top:322px;width:70px"></div>
<div class="a ct" style="left:265px;top:328px"><span class="dg">0</span><span class="dg">0</span><span class="dg">4</span><span class="dg">8</span><span class="dg">1</span></div>
<div class="a dc" style="left:332px;top:322px;width:120px"></div>
<div class="a ct" style="left:335px;top:328px">安康小区</div>
<div class="a dc" style="left:452px;top:322px;width:60px"></div>
<div class="a ct" style="left:455px;top:328px"><span class="dg">0</span></div>
<div class="a dc" style="left:512px;top:322px;width:60px"></div>
<div class="a ct" style="left:515px;top:328px"><span class="dg">0</span></div>
<div class="a dc" style="left:572px;top:322px;width:80px"></div>
<div class="a ct" style="left:575px;top:328px"><span class="dg">0</span></div>
<div class="a dc" style="left:652px;top:322px;width:70px"></div>
<div class="a dc" style="left:722px;top:322px;width:60px"></div>
<div class="a ct" style="left:725px;top:328px">小高层</div>
<div class="a dc" style="left:782px;top:322px;width:60px"></div>
<div class="a ct" style="left:785px;top:328px">宝鸡<span class="dg">.</span><span class="dg">.</span><span class="dg">.</span></div>
<div class="a dc" style="left:842px;top:322px;width:60px"></div>
<div class="a dc" style="left:902px;top:322px;width:71px"></div>
<div class="a ct" style="left:905px;top:328px">聂小倩</div>
<div class="a rh" style="left:191px;top:346px"></div>
<svg class="a" style="left:219px;top:352px" width="14" height="12" viewBox="0 0 14 12"><rect x="0.5" y="0.5" width="13" height="11" fill="#fbf3ea" stroke="#d8b898"/><path d="M1.5 10 L1.5 8.5 L4 6.5 L6 7.5 L8.5 6 L10 3 L12.5 7 L12.5 10Z" fill="#b07840"/><circle cx="4" cy="3.3" r="1.2" fill="#c08850"/></svg>
<div class="a rn" style="left:229px;top:352px">58</div>
<div class="a dc" style="left:262px;top:346px;width:70px"></div>
<div class="a ct" style="left:265px;top:352px"><span class="dg">0</span><span class="dg">0</span><span class="dg">4</span><span class="dg">8</span><span class="dg">0</span></div>
<div class="a dc" style="left:332px;top:346px;width:120px"></div>
<div class="a ct" style="left:335px;top:352px">安康小区</div>
<div class="a dc" style="left:452px;top:346px;width:60px"></div>
<div class="a ct" style="left:455px;top:352px"><span class="dg">0</span></div>
<div class="a dc" style="left:512px;top:346px;width:60px"></div>
<div class="a ct" style="left:515px;top:352px"><span class="dg">0</span></div>
<div class="a dc" style="left:572px;top:346px;width:80px"></div>
<div class="a ct" style="left:575px;top:352px"><span class="dg">0</span></div>
<div class="a dc" style="left:652px;top:346px;width:70px"></div>
<div class="a dc" style="left:722px;top:346px;width:60px"></div>
<div class="a ct" style="left:725px;top:352px">小高层</div>
<div class="a dc" style="left:782px;top:346px;width:60px"></div>
<div class="a dc" style="left:842px;top:346px;width:60px"></div>
<div class="a dc" style="left:902px;top:346px;width:71px"></div>
<div class="a ct" style="left:905px;top:352px">聂小倩</div>
<div class="a rh" style="left:191px;top:370px"></div>
<svg class="a" style="left:219px;top:376px" width="14" height="12" viewBox="0 0 14 12"><rect x="0.5" y="0.5" width="13" height="11" fill="#fbf3ea" stroke="#d8b898"/><path d="M1.5 10 L1.5 8.5 L4 6.5 L6 7.5 L8.5 6 L10 3 L12.5 7 L12.5 10Z" fill="#b07840"/><circle cx="4" cy="3.3" r="1.2" fill="#c08850"/></svg>
<div class="a rn" style="left:229px;top:376px">59</div>
<div class="a dc" style="left:262px;top:370px;width:70px"></div>
<div class="a ct" style="left:265px;top:376px"><span class="dg">0</span><span class="dg">0</span><span class="dg">4</span><span class="dg">7</span><span class="dg">9</span></div>
<div class="a dc" style="left:332px;top:370px;width:120px"></div>
<div class="a ct" style="left:335px;top:376px">奥林匹克花园三期</div>
<div class="a dc" style="left:452px;top:370px;width:60px"></div>
<div class="a ct" style="left:455px;top:376px"><span class="dg">0</span></div>
<div class="a dc" style="left:512px;top:370px;width:60px"></div>
<div class="a ct" style="left:515px;top:376px"><span class="dg">0</span></div>
<div class="a dc" style="left:572px;top:370px;width:80px"></div>
<div class="a ct" style="left:575px;top:376px"><span class="dg">0</span></div>
<div class="a dc" style="left:652px;top:370px;width:70px"></div>
<div class="a dc" style="left:722px;top:370px;width:60px"></div>
<div class="a ct" style="left:725px;top:376px">小高层</div>
<div class="a dc" style="left:782px;top:370px;width:60px"></div>
<div class="a dc" style="left:842px;top:370px;width:60px"></div>
<div class="a dc" style="left:902px;top:370px;width:71px"></div>
<div class="a ct" style="left:905px;top:376px">聂小倩</div>
<div class="a rh" style="left:191px;top:394px"></div>
<svg class="a" style="left:219px;top:400px" width="14" height="12" viewBox="0 0 14 12"><rect x="0.5" y="0.5" width="13" height="11" fill="#fbf3ea" stroke="#d8b898"/><path d="M1.5 10 L1.5 8.5 L4 6.5 L6 7.5 L8.5 6 L10 3 L12.5 7 L12.5 10Z" fill="#b07840"/><circle cx="4" cy="3.3" r="1.2" fill="#c08850"/></svg>
<div class="a rn" style="left:229px;top:400px">60</div>
<div class="a dc" style="left:262px;top:394px;width:70px"></div>
<div class="a ct" style="left:265px;top:400px"><span class="dg">0</span><span class="dg">0</span><span class="dg">4</span><span class="dg">7</span><span class="dg">8</span></div>
<div class="a dc" style="left:332px;top:394px;width:120px"></div>
<div class="a ct" style="left:335px;top:400px">安康公寓</div>
<div class="a dc" style="left:452px;top:394px;width:60px"></div>
<div class="a ct" style="left:455px;top:400px"><span class="dg">0</span></div>
<div class="a dc" style="left:512px;top:394px;width:60px"></div>
<div class="a ct" style="left:515px;top:400px"><span class="dg">0</span></div>
<div class="a dc" style="left:572px;top:394px;width:80px"></div>
<div class="a ct" style="left:575px;top:400px"><span class="dg">0</span></div>
<div class="a dc" style="left:652px;top:394px;width:70px"></div>
<div class="a dc" style="left:722px;top:394px;width:60px"></div>
<div class="a ct" style="left:725px;top:400px">小高层</div>
<div class="a dc" style="left:782px;top:394px;width:60px"></div>
<div class="a ct" style="left:785px;top:400px">北京<span class="dg">.</span><span class="dg">.</span><span class="dg">.</span></div>
<div class="a dc" style="left:842px;top:394px;width:60px"></div>
<div class="a dc" style="left:902px;top:394px;width:71px"></div>
<div class="a ct" style="left:905px;top:400px">聂小倩</div>
<div class="a rh" style="left:191px;top:418px"></div>
<svg class="a" style="left:219px;top:424px" width="14" height="12" viewBox="0 0 14 12"><rect x="0.5" y="0.5" width="13" height="11" fill="#fbf3ea" stroke="#d8b898"/><path d="M1.5 10 L1.5 8.5 L4 6.5 L6 7.5 L8.5 6 L10 3 L12.5 7 L12.5 10Z" fill="#b07840"/><circle cx="4" cy="3.3" r="1.2" fill="#c08850"/></svg>
<div class="a rn" style="left:229px;top:424px">61</div>
<div class="a dc" style="left:262px;top:418px;width:70px"></div>
<div class="a dc" style="left:332px;top:418px;width:120px"></div>
<div class="a ct" style="left:335px;top:424px">安亭新镇颂苑</div>
<div class="a dc" style="left:452px;top:418px;width:60px"></div>
<div class="a ct" style="left:455px;top:424px"><span class="dg">0</span></div>
<div class="a dc" style="left:512px;top:418px;width:60px"></div>
<div class="a ct" style="left:515px;top:424px"><span class="dg">0</span></div>
<div class="a dc" style="left:572px;top:418px;width:80px"></div>
<div class="a ct" style="left:575px;top:424px"><span class="dg">0</span></div>
<div class="a dc" style="left:652px;top:418px;width:70px"></div>
<div class="a dc" style="left:722px;top:418px;width:60px"></div>
<div class="a ct" style="left:725px;top:424px">小高层</div>
<div class="a dc" style="left:782px;top:418px;width:60px"></div>
<div class="a dc" style="left:842px;top:418px;width:60px"></div>
<div class="a dc" style="left:902px;top:418px;width:71px"></div>
<div class="a ct" style="left:905px;top:424px">聂小倩</div>
<div class="a rh rs" style="left:191px;top:442px"></div>
<svg class="a" style="left:219px;top:448px" width="14" height="12" viewBox="0 0 14 12"><rect x="0.5" y="0.5" width="13" height="11" fill="#fbf3ea" stroke="#d8b898"/><path d="M1.5 10 L1.5 8.5 L4 6.5 L6 7.5 L8.5 6 L10 3 L12.5 7 L12.5 10Z" fill="#b07840"/><circle cx="4" cy="3.3" r="1.2" fill="#c08850"/></svg>
<div class="a rn" style="left:229px;top:448px">62</div>
<div class="a dc ds" style="left:262px;top:442px;width:70px"></div>
<div class="a dc ds" style="left:332px;top:442px;width:120px"></div>
<div class="a ct" style="left:335px;top:448px">安康新村</div>
<div class="a dc ds" style="left:452px;top:442px;width:60px"></div>
<div class="a ct" style="left:455px;top:448px"><span class="dg">0</span></div>
<div class="a dc ds" style="left:512px;top:442px;width:60px"></div>
<div class="a ct" style="left:515px;top:448px"><span class="dg">0</span></div>
<div class="a dc ds" style="left:572px;top:442px;width:80px"></div>
<div class="a ct" style="left:575px;top:448px"><span class="dg">0</span></div>
<div class="a dc ds" style="left:652px;top:442px;width:70px"></div>
<div class="a dc ds" style="left:722px;top:442px;width:60px"></div>
<div class="a ct" style="left:725px;top:448px">小高层</div>
<div class="a dc ds" style="left:782px;top:442px;width:60px"></div>
<div class="a dc ds" style="left:842px;top:442px;width:60px"></div>
<div class="a dc ds" style="left:902px;top:442px;width:71px"></div>
<div class="a ct" style="left:905px;top:448px">聂小倩</div>
<svg class="a" style="left:196px;top:447px" width="6" height="8" viewBox="0 0 6 8"><path d="M0.5 0 L5.5 4 L0.5 8Z" fill="#333"/></svg>
<!--/MAIN-->
<!--P2-->
<div class="a" style="left:191px;top:452px;width:800px;height:17px;background:#121212"></div>
<svg class="a" style="left:194px;top:455px" width="14" height="11" viewBox="0 0 14 11"><path d="M10 0.5 L10 10.5 L3.5 5.5Z" fill="#5a5a5a"/></svg>
<div class="a" style="left:210px;top:453px;width:406px;height:15px;border-radius:2px;background:linear-gradient(180deg,#f4f4f4 0,#dedede 40%,#b4b4b4 50%,#a8a8a8 85%,#c4c4c4 100%)"></div>
<div class="a" style="left:408px;top:457px;width:8px;height:8px;background:repeating-linear-gradient(90deg,#707070 0,#707070 1px,transparent 1px,transparent 2px)"></div>
<svg class="a" style="left:962px;top:456px" width="8" height="11" viewBox="0 0 8 11"><path d="M1.5 0.5 L1.5 10.5 L7 5.5Z" fill="#5a5a5a"/></svg>
<div class="a" style="left:973px;top:173px;width:17px;height:279px;background:#141414"></div>
<svg class="a" style="left:976px;top:177px" width="11" height="7" viewBox="0 0 11 7"><path d="M0.5 6.5 L10.5 6.5 L5.5 0.5Z" fill="#606060"/></svg>
<div class="a" style="left:974px;top:226px;width:15px;height:13px;border-radius:2px;background:linear-gradient(180deg,#f8f8f8,#c8c8c8);border:1px solid #9a9a9a"></div>
<div class="a" style="left:977px;top:229px;width:9px;height:7px;background:repeating-linear-gradient(180deg,#606060 0,#606060 1px,transparent 1px,transparent 2px)"></div>
<svg class="a" style="left:976px;top:440px" width="11" height="7" viewBox="0 0 11 7"><path d="M0.5 0.5 L10.5 0.5 L5.5 6.5Z" fill="#606060"/></svg>
<div class="a" style="left:190px;top:469px;width:801px;height:172px;background:#fff"></div>
<div class="a" style="left:191px;top:470px;width:799px;height:26px;border-radius:3px;background:linear-gradient(180deg,#fbfbfb 0,#f4f4f4 50%,#ececec 100%)"></div>
<div class="a grip" style="left:192px;top:475px"></div>
<svg class="a" style="left:198px;top:475px" width="16" height="16" viewBox="0 0 16 16"><path d="M8 1 L8 15 M1 8 L15 8" stroke="#f07818" stroke-width="3"/></svg>
<div class="a tb" style="left:218px;top:476px">房源</div>
<div class="a vsep" style="left:252px;top:475px"></div>
<svg class="a" style="left:256px;top:474px" width="17" height="17" viewBox="0 0 17 17"><rect x="1" y="2.5" width="15" height="2" fill="#6a6a6a"/><rect x="6" y="0.5" width="5" height="2.5" fill="none" stroke="#6a6a6a" stroke-width="1.2"/><path d="M2.5 5 L3.5 16 L13.5 16 L14.5 5Z" fill="#6a6a6a"/><path d="M6 7 L6 14 M8.5 7 L8.5 14 M11 7 L11 14" stroke="#f4f4f4" stroke-width="1.2"/></svg>
<div class="a tb" style="left:276px;top:476px">删除</div>
<div class="a vsep" style="left:310px;top:475px"></div>
<svg class="a" style="left:314px;top:474px" width="17" height="17" viewBox="0 0 17 17"><path d="M9 2 L2 2 L2 15.5 L15 15.5 L15 8" stroke="#1e90e8" stroke-width="1.8" fill="none"/><path d="M15 1 L16.5 2.5 L9 10 L6.5 11 L7.5 8.5Z" fill="#1e90e8"/></svg>
<div class="a tb" style="left:334px;top:476px">编辑</div>
<div class="a vsep" style="left:368px;top:475px"></div>
<div class="a tb" style="left:376px;top:476px;color:#8a8a8a">前一页</div>
<div class="a tb" style="left:423px;top:476px;color:#8a8a8a">后一页</div>
<div class="a vsep" style="left:470px;top:475px"></div>
<div class="a tb" style="left:476px;top:476px;color:#2020d8">符合条件的结果共338条</div>
<div class="a tb" style="left:867px;top:476px">保存布局</div>
<svg class="a" style="left:925px;top:475px" width="63" height="16" viewBox="0 0 63 16"><rect x="0.5" y="0.5" width="15" height="15" fill="#fff" stroke="#3a98d8"/><rect x="2.5" y="2.5" width="11" height="4" fill="#fff" stroke="#b8b8b8" stroke-width="0.8"/><rect x="2.5" y="8.5" width="3" height="5" fill="#fff" stroke="#b8b8b8" stroke-width="0.8"/><rect x="7" y="8" width="7" height="6" fill="#80c8f0"/>
<rect x="23.5" y="0.5" width="15" height="15" fill="#fff" stroke="#3a98d8"/><rect x="25.5" y="2.5" width="11" height="4.5" fill="#fff" stroke="#b8b8b8" stroke-width="0.8"/><rect x="25" y="8.5" width="12" height="5.5" fill="#80c8f0"/>
<rect x="46.5" y="0.5" width="15" height="15" fill="#fff" stroke="#3a98d8"/><rect x="48" y="2" width="12" height="12" fill="#2a9ae0"/></svg>
<div class="a" style="left:191px;top:500px;width:499px;height:141px;border:2px solid #888;border-right-color:#a0a0a0;background:#fff"></div>
<div class="a dt" style="left:211px;top:511px">房源地段<span style="display:inline-block;width:12px;padding-left:2px;font-weight:bold">:</span><span style="margin-left:4px">浦东<span style="display:inline-block;width:6px;text-align:center">/</span>周浦<span style="display:inline-block;width:6px;text-align:center">/</span>安康新村</span></div>
<div class="a dt" style="left:211px;top:540px">房源描述<span style="display:inline-block;width:12px;padding-left:2px;font-weight:bold">:</span><span style="margin-left:4px">小高层<span style="display:inline-block;width:12px;padding-left:1px">,</span>简单装修</span></div>
<div class="a dt" style="left:211px;top:569px">房源设施<span style="display:inline-block;width:12px;padding-left:2px;font-weight:bold">:</span></div>
<div class="a dt" style="left:211px;top:598px">房源备注<span style="display:inline-block;width:12px;padding-left:2px;font-weight:bold">:</span></div>
<div class="a" style="left:694px;top:500px;width:269px;height:141px;border:2px solid #7a7a7a;border-right-width:1px;background:#fff"></div>
<div class="a" style="left:696px;top:503px;width:266px;height:29px;background:#909090"></div>
<div class="a fh" style="left:697px;top:503px;width:58px"></div>
<div class="a fh" style="left:756px;top:503px;width:100px"></div>
<div class="a fh" style="left:857px;top:503px;width:104px"></div>
<div class="a" style="left:704px;top:506px;font-size:12px;line-height:11.5px">跟进<br>说明</div>
<svg class="a" style="left:740px;top:513px" width="9" height="7" viewBox="0 0 9 7"><path d="M0.5 0.5 L8.5 0.5 L4.5 6.5Z" fill="#f4f4f4" stroke="#b0b0b0" stroke-width="0.8"/></svg>
<div class="a tb" style="left:777px;top:511px">跟进人</div>
<div class="a tb" style="left:872px;top:511px">跟进时间</div>
<div class="a" style="left:966px;top:500px;width:27px;height:141px;border:1px solid #707070;border-right:2px solid #5a5e66;background:#fff"></div>
<div class="a" style="left:970px;top:503px;width:16px;height:2px;background:repeating-linear-gradient(90deg,#b0b0b0 0,#b0b0b0 2px,transparent 2px,transparent 4px)"></div>
<svg class="a" style="left:969px;top:511px" width="17" height="17" viewBox="0 0 17 17"><path d="M8.5 1 L8.5 16 M1 8.5 L16 8.5" stroke="#f07818" stroke-width="3"/></svg>
<svg class="a" style="left:969px;top:534px" width="18" height="17" viewBox="0 0 18 17"><path d="M7.5 15.5 L3 15.5 Q1.3 15.5 1.3 13.8 L1.3 3 Q1.3 1.3 3 1.3 L14.2 1.3 Q15.9 1.3 15.9 3 L15.9 8" stroke="#1a98e8" stroke-width="1.6" fill="none"/><circle cx="10" cy="10.3" r="3.2" stroke="#1a98e8" stroke-width="1.7" fill="none"/><path d="M12.3 12.6 L15.5 15.6" stroke="#1a98e8" stroke-width="2"/></svg>

<!--/P2-->
</body></html>
